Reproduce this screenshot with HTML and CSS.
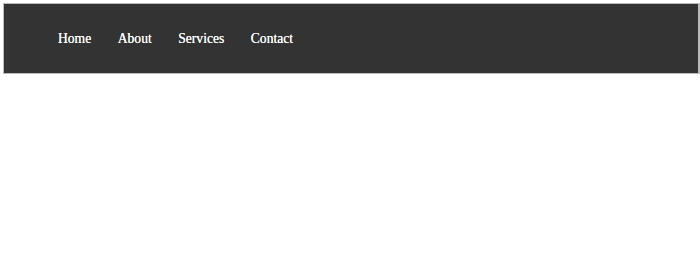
FILE: index.html
```html
<!DOCTYPE html>
<html lang="en">
<head>
  <meta charset="UTF-8">
  <meta name="viewport" content="width=device-width, initial-scale=1">
  <title>Menu</title>
  <link rel="stylesheet" href="styles.css">
</head>
<body>

  <nav class="menu">
    <a href="#">Home</a>
    <a href="#">About</a>
    <a href="#">Services</a>
    <a href="#">Contact</a>
  </nav>

</body>
</html>
```

FILE: styles.css
```css
/* Page */
body {
  margin: 0;
  padding: 3px 0 0 3px;
  background: #fff;
  font-family: 'Liberation Serif', 'Times New Roman', serif;
}
/* Barre de navigation */
.menu {
  box-sizing: border-box;
  width: 697px;
  height: 71px;
  background: #333;
  border: 1px solid #bbb;
  border-right-width: 2px;
  display: flex;
  align-items: center;
  gap: 26.5px;
  padding-left: 54px;
}
.menu a {
  color: #fff;
  text-decoration: none;
  font-size: 13.6px;
  text-shadow: 0 0 0.4px #fff;
}
```
